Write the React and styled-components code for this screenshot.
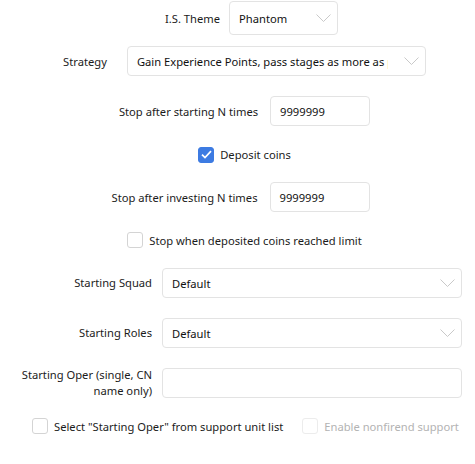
import React from 'react'
import styled, { createGlobalStyle } from 'styled-components';

const GlobalStyle = createGlobalStyle`
    body {
        margin: 0;
        background: #ffffff;
        font-family: "Noto Sans", "Open Sans", sans-serif;
        font-size: 11.2px;
        color: #1b1b1b;
        overflow: hidden;
    }
`;

function Chevron() {
  return (
    <svg width="15" height="8" viewBox="0 0 15 8">
      <path d="M0.5 0.5 L7.5 7.5 L14.5 0.5" fill="none" stroke="#c9c9c9" strokeWidth="1" />
    </svg>
  )
}

function Combo({ value, width }) {
  return (
    <ComboBox $width={width}>
      <ComboText>{value}</ComboText>
      <Chevron />
    </ComboBox>
  )
}

function Check({ checked, disabled, children }) {
  return (
    <CheckLabel $disabled={disabled}>
      <Box $checked={checked} $disabled={disabled}>
        {checked && (
          <svg width="11" height="9" viewBox="0 0 11 9">
            <path d="M1 4.6 L4 7.6 L10 1.2" fill="none" stroke="#ffffff" strokeWidth="1.7" />
          </svg>
        )}
      </Box>
      {children}
    </CheckLabel>
  )
}

function App() {
  return (
    <Page>
        <GlobalStyle />
        <Top>
            <Row $gap={9} $height={34} $shift={14}>
                <Label>I.S. Theme</Label>
                <Combo value="Phantom" width={109} />
            </Row>
            <Row $gap={20} $top={11}>
                <Label>Strategy</Label>
                <Combo value="Gain Experience Points, pass stages as more as possible" width={299} />
            </Row>
            <Row $gap={12} $top={20}>
                <Label>Stop after starting N times</Label>
                <TextBox $width={100}>9999999</TextBox>
            </Row>
            <Row $top={20} $height={17}>
                <Check checked>Deposit coins</Check>
            </Row>
            <Row $gap={12} $top={19} $shift={-8}>
                <Label>Stop after investing N times</Label>
                <TextBox $width={100}>9999999</TextBox>
            </Row>
            <Row $top={20} $height={16}>
                <Check>Stop when deposited coins reached limit</Check>
            </Row>
        </Top>
        <Form>
            <FormLabel>Starting Squad</FormLabel>
            <Combo value="Default" width={300} />
            <FormLabel>Starting Roles</FormLabel>
            <Combo value="Default" width={300} />
            <FormLabel>Starting Oper (single, CN<br />name only)</FormLabel>
            <TextBox $width={300} />
        </Form>
        <Bottom>
            <Check>Select "Starting Oper" from support unit list</Check>
            <Check disabled>Enable nonfirend support</Check>
        </Bottom>
    </Page>
  )
}

const Page = styled.div`
    width: 475px;
    height: 464px;
    display: flex;
    flex-direction: column;
`;

const Top = styled.div`
    display: flex;
    flex-direction: column;
    padding-left: 14px;
`;

const Row = styled.div`
    display: flex;
    align-items: center;
    justify-content: center;
    gap: ${p => p.$gap || 0}px;
    height: ${p => p.$height || 30}px;
    margin-top: ${p => p.$top ?? 1}px;
    margin-left: ${p => p.$shift || 0}px;
`;

const Label = styled.span`
    white-space: nowrap;
`;

const ComboBox = styled.div`
    box-sizing: border-box;
    width: ${p => p.$width}px;
    height: 100%;
    border: 1px solid #e3e3e3;
    border-radius: 4px;
    background: #ffffff;
    display: flex;
    align-items: center;
    padding: 0 6px 0 9px;
    color: #111111;
`;

const ComboText = styled.span`
    flex: 1;
    overflow: hidden;
    white-space: nowrap;
    margin-right: 16px;
`;

const TextBox = styled.div`
    box-sizing: border-box;
    width: ${p => p.$width}px;
    height: 30px;
    border: 1px solid #e3e3e3;
    border-radius: 4px;
    display: flex;
    align-items: center;
    padding-left: 9px;
    color: #111111;
`;

const CheckLabel = styled.label`
    display: flex;
    align-items: center;
    gap: 6px;
    white-space: nowrap;
    color: ${p => p.$disabled ? '#b3b3b3' : '#1b1b1b'};
`;

const Box = styled.span`
    box-sizing: border-box;
    width: 16px;
    height: 16px;
    border-radius: 3px;
    display: flex;
    align-items: center;
    justify-content: center;
    border: 1px solid ${p => p.$checked ? '#3d7be2' : p.$disabled ? '#ececec' : '#d4d4d4'};
    background: ${p => p.$checked ? '#3d7be2' : '#ffffff'};
`;

const Form = styled.div`
    display: grid;
    grid-template-columns: 140px 300px;
    grid-auto-rows: 30px;
    column-gap: 10px;
    row-gap: 20px;
    padding-left: 12px;
    margin-top: 20px;
`;

const FormLabel = styled.span`
    display: flex;
    align-items: center;
    justify-content: flex-end;
    text-align: right;
    line-height: 16px;
    white-space: nowrap;
`;

const Bottom = styled.div`
    display: flex;
    align-items: center;
    gap: 19px;
    padding-left: 32px;
    margin-top: 20px;
    height: 16px;
`;

export default App;
